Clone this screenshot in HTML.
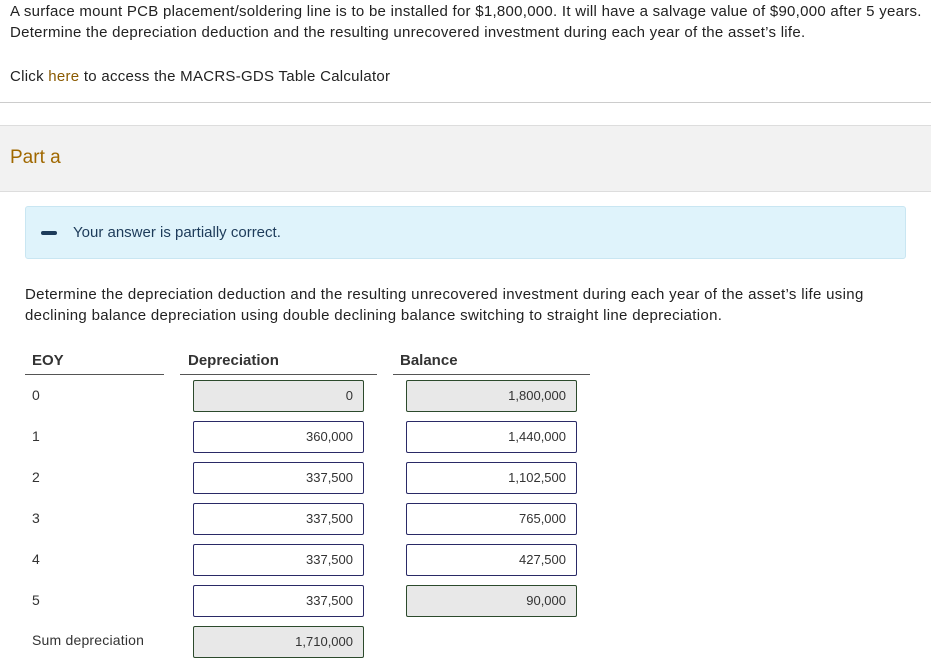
<!DOCTYPE html>
<html><head><style>
body{margin:0;width:931px;height:663px;overflow:hidden;background:#fff;font-family:"Liberation Sans",sans-serif;color:#222;position:relative}
.a{position:absolute;white-space:nowrap}
.t{font-size:15px;line-height:21px;letter-spacing:0.27px}
.box{position:absolute;width:171px;height:32px;border:1px solid #2a2a66;border-radius:2px;box-sizing:border-box;text-align:right;padding-right:10px;font-size:13px;line-height:30px;background:#fff;color:#333}
.g{background:#e8e8e8;border-color:#2c4a2c}
.row{position:absolute;left:32px;font-size:14px;color:#333;letter-spacing:0.2px}
</style></head><body>
<div class="a t" style="left:10px;top:1px">A surface mount PCB placement/soldering line is to be installed for $1,800,000. It will have a salvage value of $90,000 after 5 years.</div>
<div class="a t" style="left:10px;top:22px">Determine the depreciation deduction and the resulting unrecovered investment during each year of the asset’s life.</div>
<div class="a t" style="left:10px;top:66px">Click <span style="color:#8a5a00">here</span> to access the MACRS-GDS Table Calculator</div>
<div class="a" style="left:0;top:102px;width:931px;height:1px;background:#ccc"></div>
<div class="a" style="left:0;top:125px;width:931px;height:65px;background:#f2f2f2;border-top:1px solid #ddd;border-bottom:1px solid #ddd"></div>
<div class="a" style="left:10px;top:147px;font-size:19px;color:#a06800">Part a</div>
<div class="a" style="left:25px;top:206px;width:881px;height:53px;background:#dff3fb;border:1px solid #c9e6f2;border-radius:3px;box-sizing:border-box"></div>
<div class="a" style="left:41px;top:231px;width:16px;height:4px;background:#1d3b5a;border-radius:2px"></div>
<div class="a" style="left:73px;top:224px;font-size:15px;color:#1d3b5a">Your answer is partially correct.</div>
<div class="a t" style="left:25px;top:284px;letter-spacing:0.32px">Determine the depreciation deduction and the resulting unrecovered investment during each year of the asset’s life using</div>
<div class="a t" style="left:25px;top:305px;letter-spacing:0.32px">declining balance depreciation using double declining balance switching to straight line depreciation.</div>
<div class="a" style="left:32px;top:352px;font-size:15px;font-weight:bold;color:#333">EOY</div>
<div class="a" style="left:188px;top:352px;font-size:15px;font-weight:bold;color:#333">Depreciation</div>
<div class="a" style="left:400px;top:352px;font-size:15px;font-weight:bold;color:#333">Balance</div>
<div class="a" style="left:25px;top:374px;width:139px;height:1px;background:#555"></div>
<div class="a" style="left:180px;top:374px;width:197px;height:1px;background:#555"></div>
<div class="a" style="left:393px;top:374px;width:197px;height:1px;background:#555"></div>

<div class="row" style="top:387px">0</div>
<div class="row" style="top:428px">1</div>
<div class="row" style="top:469px">2</div>
<div class="row" style="top:510px">3</div>
<div class="row" style="top:551px">4</div>
<div class="row" style="top:592px">5</div>
<div class="row" style="top:632px">Sum depreciation</div>

<div class="box g" style="left:193px;top:380px">0</div>
<div class="box" style="left:193px;top:421px">360,000</div>
<div class="box" style="left:193px;top:462px">337,500</div>
<div class="box" style="left:193px;top:503px">337,500</div>
<div class="box" style="left:193px;top:544px">337,500</div>
<div class="box" style="left:193px;top:585px">337,500</div>
<div class="box g" style="left:193px;top:626px">1,710,000</div>

<div class="box g" style="left:406px;top:380px">1,800,000</div>
<div class="box" style="left:406px;top:421px">1,440,000</div>
<div class="box" style="left:406px;top:462px">1,102,500</div>
<div class="box" style="left:406px;top:503px">765,000</div>
<div class="box" style="left:406px;top:544px">427,500</div>
<div class="box g" style="left:406px;top:585px">90,000</div>
</body></html>
